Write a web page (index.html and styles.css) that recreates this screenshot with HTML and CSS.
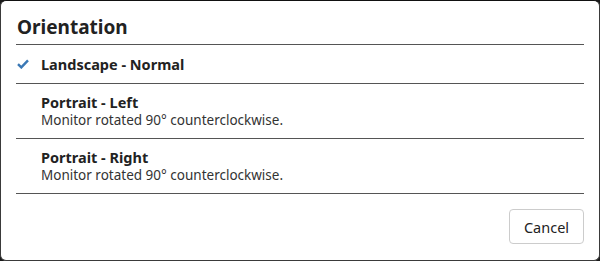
FILE: index.html
```html
<!DOCTYPE html>
<html lang="en">
<head>
    <meta charset="UTF-8">
    <title>Orientation</title>
    <link rel="stylesheet" href="styles.css">
</head>
<body>

    <!-- Dialog -->
    <div class="dialog">
        <h2 class="dialog-title">Orientation</h2>

        <ul class="options">
            <li class="option selected">
                <span class="check">
                    <svg width="12" height="10" viewBox="0 0 12 10">
                        <path d="M1 5.2 L4.3 8.4 L11 1.4" fill="none" stroke="#3a78b5" stroke-width="2.4" stroke-linecap="butt"/>
                    </svg>
                </span>
                <div class="option-text">
                    <div class="option-name">Landscape - Normal</div>
                </div>
            </li>
            <li class="option">
                <span class="check"></span>
                <div class="option-text">
                    <div class="option-name">Portrait - Left</div>
                    <div class="option-desc">Monitor rotated 90° counterclockwise.</div>
                </div>
            </li>
            <li class="option">
                <span class="check"></span>
                <div class="option-text">
                    <div class="option-name">Portrait - Right</div>
                    <div class="option-desc">Monitor rotated 90° counterclockwise.</div>
                </div>
            </li>
        </ul>

        <div class="footer">
            <button class="btn">Cancel</button>
        </div>
    </div>

</body>
</html>
```

FILE: styles.css
```css
body {
    margin: 0;
    padding: 0;
    background-color: #1a1a1a;
    font-family: 'Noto Sans', 'Open Sans', sans-serif;
    color: #222;
}
.dialog {
    box-sizing: border-box;
    width: 600px;
    height: 261px;
    background-color: #fff;
    border: 1px solid #3a3a3a;
    border-top-color: #111;
    border-radius: 6px;
    padding: 0 15px 0 15px;
}
.dialog-title {
    margin: 0;
    padding: 14px 0 0 1px;
    height: 44px;
    box-sizing: border-box;
    font-size: 19px;
    line-height: 24px;
    font-weight: bold;
    color: #222;
    border-bottom: 1px solid #555;
}
.options {
    list-style: none;
    margin: 0;
    padding: 0;
}
.option {
    display: flex;
    align-items: center;
    border-bottom: 1px solid #555;
    height: 55px;
    box-sizing: border-box;
}
.option.selected {
    height: 39px;
}
.check {
    width: 24px;
    padding-left: 1px;
    display: flex;
    align-items: center;
}
.option-name {
    font-size: 14.5px;
    font-weight: bold;
    line-height: 18px;
}
.option-desc {
    font-size: 13.5px;
    line-height: 18px;
    color: #333;
}
.footer {
    display: flex;
    justify-content: flex-end;
    padding-top: 15px;
}
.btn {
    font-family: inherit;
    font-size: 14.5px;
    color: #222;
    background-color: #fff;
    border: 1px solid #ccc;
    border-radius: 4px;
    width: 75px;
    height: 35px;
    cursor: pointer;
}
```
